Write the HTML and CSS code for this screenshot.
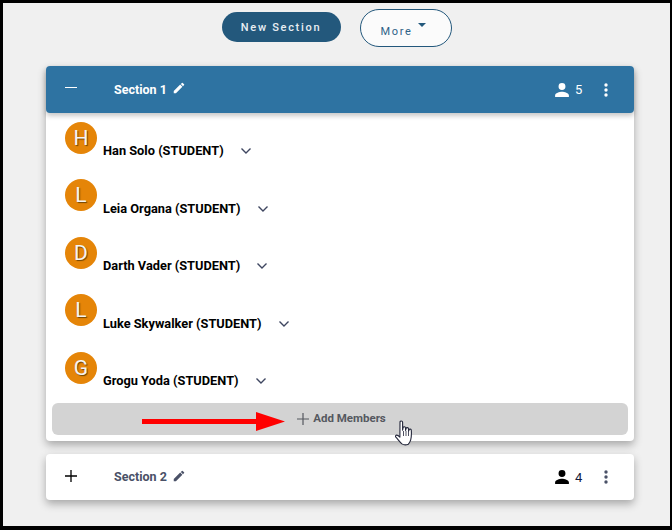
FILE: index.html
```html
<!DOCTYPE html>
<html lang="en">
<head>
<meta charset="utf-8">
<title>Sections</title>
<link rel="stylesheet" href="styles.css">
</head>
<body>
<div class="frame">
  <div class="toolbar">
    <button class="btn btn-solid">New Section</button>
    <button class="btn btn-outline"><span class="more-label">More</span><span class="caret"></span></button>
  </div>

  <section class="card card-open">
    <header class="card-head head-blue">
      <svg class="toggle" width="14" height="14" viewBox="0 0 14 14"><path d="M1 6.500h12" stroke="currentColor" stroke-width="1"/></svg>
      <span class="title">Section 1</span>
      <svg class="pencil" width="14" height="14" viewBox="0 0 24 24"><path fill="currentColor" d="M3 17.25V21h3.75L17.81 9.94l-3.75-3.75L3 17.25zM20.71 7.04a1 1 0 0 0 0-1.41l-2.34-2.34a1 1 0 0 0-1.41 0l-1.83 1.83 3.75 3.75 1.83-1.83z"/></svg>
      <span class="spacer"></span>
      <svg class="person" width="18" height="18" viewBox="0 0 24 24"><path fill="currentColor" d="M12 12a4.6 4.6 0 1 0 0-9.2 4.6 4.6 0 0 0 0 9.2zm0 2.2c-3.2 0-9.2 1.6-9.2 4.7v2.3h18.4v-2.3c0-3.1-6-4.7-9.2-4.7z"/></svg>
      <span class="count">5</span>
      <svg class="kebab" width="4" height="14" viewBox="0 0 4 14"><circle cx="2" cy="2" r="1.7" fill="currentColor"/><circle cx="2" cy="7" r="1.7" fill="currentColor"/><circle cx="2" cy="12" r="1.7" fill="currentColor"/></svg>
    </header>
    <div class="members">
      <div class="member">
        <span class="avatar">H</span><span class="name">Han Solo (STUDENT)</span>
        <svg class="chev" width="12" height="8" viewBox="0 0 12 8"><path d="M1.5 1.5 6 6l4.5-4.5" fill="none" stroke="currentColor" stroke-width="1.4"/></svg>
      </div>
      <div class="member">
        <span class="avatar">L</span><span class="name">Leia Organa (STUDENT)</span>
        <svg class="chev" width="12" height="8" viewBox="0 0 12 8"><path d="M1.5 1.5 6 6l4.5-4.5" fill="none" stroke="currentColor" stroke-width="1.4"/></svg>
      </div>
      <div class="member">
        <span class="avatar">D</span><span class="name">Darth Vader (STUDENT)</span>
        <svg class="chev" width="12" height="8" viewBox="0 0 12 8"><path d="M1.5 1.5 6 6l4.5-4.5" fill="none" stroke="currentColor" stroke-width="1.4"/></svg>
      </div>
      <div class="member">
        <span class="avatar">L</span><span class="name">Luke Skywalker (STUDENT)</span>
        <svg class="chev" width="12" height="8" viewBox="0 0 12 8"><path d="M1.5 1.5 6 6l4.5-4.5" fill="none" stroke="currentColor" stroke-width="1.4"/></svg>
      </div>
      <div class="member">
        <span class="avatar">G</span><span class="name">Grogu Yoda (STUDENT)</span>
        <svg class="chev" width="12" height="8" viewBox="0 0 12 8"><path d="M1.5 1.5 6 6l4.5-4.5" fill="none" stroke="currentColor" stroke-width="1.4"/></svg>
      </div>
    </div>
    <div class="add-row">
      <svg class="plus-small" width="14" height="14" viewBox="0 0 14 14"><path d="M7 1v12M1 7h12" stroke="currentColor" stroke-width="1.2"/></svg>
      <span>Add Members</span>
    </div>
    <svg class="arrow" width="146" height="22" viewBox="0 0 146 22"><path fill="#ff0000" d="M0 9h114V2l29 9.500-29 9.500v-7H0z"/></svg>
    <svg class="cursor" width="20" height="26" viewBox="0 0 20 26"><path fill="#fff" stroke="#23263a" stroke-width="1.100" stroke-linejoin="round" d="M5 2.200c0-1.600 2.600-1.600 2.600 0v8l.5-2.600c.3-1.300 2.400-1.100 2.400.3l.1 2.500.5-2c.3-1.200 2.300-1 2.400.4l.1 2.200.5-1.300c.4-1 2.100-.8 2.200.6.200 3.100.2 6.800-.6 9.600-.5 1.900-1.500 3.300-2.300 4.300-2.300.9-4.900.7-6.500-.3-1.700-1.500-4.300-4.900-6-6.700-.9-1-.2-2.300 1.100-2.100.9.100 2.200 1.300 2.900 2z"/><path d="M8.500 11v5M11 11v5M13.500 11v5" stroke="#23263a" stroke-width=".8" fill="none"/></svg>
  </section>

  <section class="card card-closed">
    <header class="card-head head-white">
      <svg class="toggle" width="14" height="14" viewBox="0 0 14 14"><path d="M7 1v12M1 7h12" stroke="currentColor" stroke-width="1.300"/></svg>
      <span class="title">Section 2</span>
      <svg class="pencil" width="14" height="14" viewBox="0 0 24 24"><path fill="currentColor" d="M3 17.25V21h3.75L17.81 9.94l-3.75-3.75L3 17.25zM20.71 7.04a1 1 0 0 0 0-1.41l-2.34-2.34a1 1 0 0 0-1.41 0l-1.83 1.83 3.75 3.75 1.83-1.83z"/></svg>
      <span class="spacer"></span>
      <svg class="person" width="18" height="18" viewBox="0 0 24 24"><path fill="currentColor" d="M12 12a4.6 4.6 0 1 0 0-9.2 4.6 4.6 0 0 0 0 9.2zm0 2.2c-3.2 0-9.2 1.600-9.200 4.700v2.300h18.400v-2.300c0-3.100-6-4.700-9.200-4.700z"/></svg>
      <span class="count">4</span>
      <svg class="kebab" width="4" height="14" viewBox="0 0 4 14"><circle cx="2" cy="2" r="1.700" fill="currentColor"/><circle cx="2" cy="7" r="1.700" fill="currentColor"/><circle cx="2" cy="12" r="1.700" fill="currentColor"/></svg>
    </header>
  </section>
</div>
</body>
</html>
```
FILE: styles.css
```css
* { box-sizing: border-box; }
html, body { margin: 0; padding: 0; }
body { width: 672px; height: 530px; overflow: hidden; font-family: Roboto, "Liberation Sans", sans-serif; }

.frame {
  width: 672px;
  height: 530px;
  background: #f0f0f0;
  border-style: solid;
  border-color: #000;
  border-width: 3px 2px 4px 3px;
  padding: 6px 35px 0 43px;
}

.toolbar {
  display: flex;
  justify-content: center;
  align-items: center;
  gap: 19px;
  height: 38px;
  margin-bottom: 19px;
  padding-right: 8px;
}
.btn {
  font-family: inherit;
  border-radius: 20px;
  padding: 0;
  letter-spacing: 1.7px;
  font-size: 11px;
  font-weight: 500;
}
.btn-solid {
  width: 119px;
  height: 30px;
  background: #23587c;
  color: #e8eef3;
  border: 0;
  position: relative;
  top: -1px;
}
.btn-outline {
  width: 92px;
  height: 38px;
  background: #fbfbfb;
  color: #2f6287;
  border: 1px solid #23587c;
  font-weight: 400;
  display: flex;
  align-items: center;
  justify-content: center;
  gap: 5px;
  padding-right: 5px;
}
.more-label { padding-top: 6px; }
.caret {
  width: 0;
  height: 0;
  border-left: 4.500px solid transparent;
  border-right: 4.500px solid transparent;
  border-top: 4.500px solid #23587c;
  margin-bottom: 7px;
}

.card {
  position: relative;
  width: 588px;
  background: #fff;
  border-radius: 4px;
  box-shadow: 0 4px 8px rgba(0,0,0,.3);
}
.card-open { height: 375px; margin-bottom: 13px; }
.card-closed { height: 46px; }

.card-head {
  display: flex;
  align-items: center;
  height: 47px;
  padding: 0 26px 0 18px;
  border-radius: 4px;
}
.head-blue { background: #2e73a2; color: #fff; box-shadow: 0 3px 5px rgba(0,0,0,.22); position: relative; }
.head-white { color: #4a5167; height: 46px; }
.head-blue .toggle { margin-top: -3px; }
.head-white .toggle { color: #000; margin-top: -2px; }
.head-white .title { margin-top: -1px; }
.title { font-size: 12.500px; font-weight: 700; margin-left: 36px; }
.pencil { margin: -3px 0 0 5px; }
.spacer { flex: 1; }
.person { margin-right: 4px; }
.head-white .person { color: #000; }
.count { font-size: 13px; width: 27px; }
.head-white .count { color: #111a3c; }
.kebab { margin-left: 2px; }

.members { padding-top: 8.900px; }
.member {
  display: flex;
  align-items: flex-start;
  height: 57.500px;
  padding-left: 19px;
  color: #000;
}
.avatar {
  width: 32px;
  height: 32px;
  border-radius: 50%;
  background: #e58508;
  color: #f4f4f4;
  font-size: 21px;
  line-height: 32px;
  text-align: center;
  text-shadow: 1px 1px 1px rgba(60,40,0,.7);
  flex: none;
}
.name { font-size: 12.800px; font-weight: 700; margin: 20.300px 0 0 6px; line-height: 17px; }
.chev { margin: 25.300px 0 0 16px; color: #3e4660; }

.add-row {
  position: absolute;
  left: 6px;
  top: 337px;
  width: 576px;
  height: 32px;
  background: #d3d3d3;
  border-radius: 6px;
  display: flex;
  align-items: center;
  justify-content: center;
  gap: 3px;
  color: #55585f;
  font-size: 11.500px;
  font-weight: 700;
  padding: 0 0 2px 2px;
}
.plus-small { margin-top: 2px; }
.arrow { position: absolute; left: 96px; top: 344px; }
.cursor { position: absolute; left: 349px; top: 354px; }
```
